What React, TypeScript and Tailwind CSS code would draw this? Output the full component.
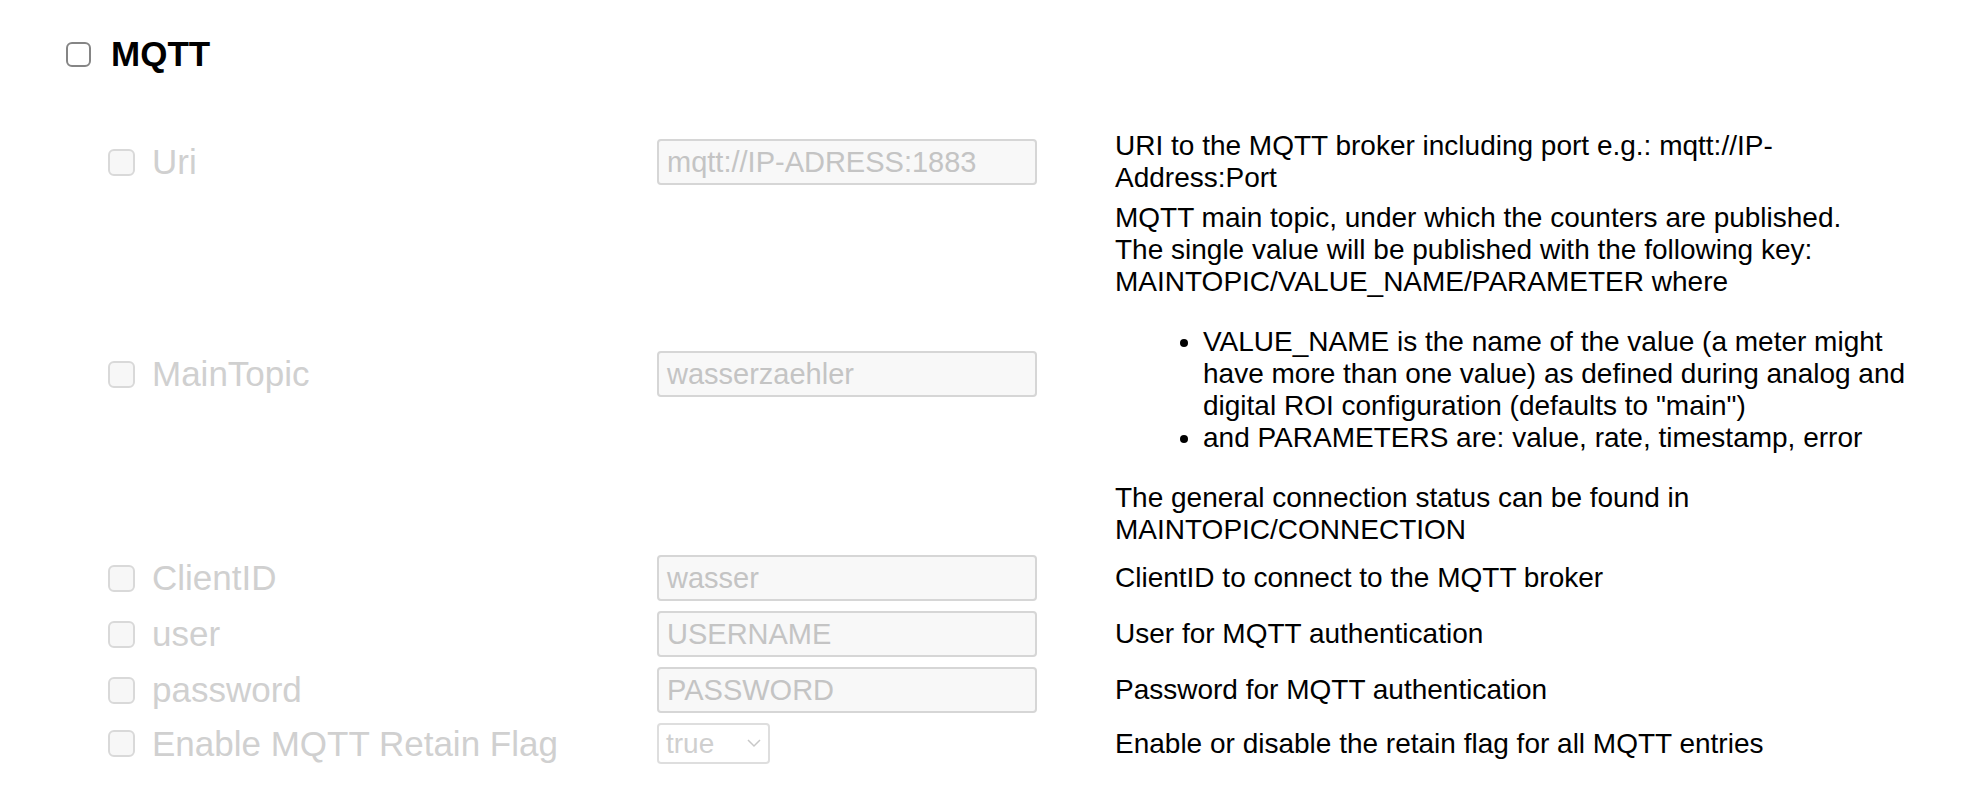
import React from "react";

type Row = {
  label: string;
  value: string;
  kind?: "input" | "select";
  desc: React.ReactNode;
};

const rows: Row[] = [
  {
    label: "Uri",
    value: "mqtt://IP-ADRESS:1883",
    desc: "URI to the MQTT broker including port e.g.: mqtt://IP-Address:Port",
  },
  {
    label: "MainTopic",
    value: "wasserzaehler",
    desc: (
      <>
        MQTT main topic, under which the counters are published.
        <br />
        The single value will be published with the following key:
        MAINTOPIC/VALUE_NAME/PARAMETER where
        <ul className="list-disc pl-[88px] my-[28px]">
          <li>
            VALUE_NAME is the name of the value (a meter might have more than
            one value) as defined during analog and digital ROI configuration
            (defaults to "main")
          </li>
          <li>and PARAMETERS are: value, rate, timestamp, error</li>
        </ul>
        The general connection status can be found in MAINTOPIC/CONNECTION
      </>
    ),
  },
  {
    label: "ClientID",
    value: "wasser",
    desc: "ClientID to connect to the MQTT broker",
  },
  {
    label: "user",
    value: "USERNAME",
    desc: "User for MQTT authentication",
  },
  {
    label: "password",
    value: "PASSWORD",
    desc: "Password for MQTT authentication",
  },
  {
    label: "Enable MQTT Retain Flag",
    value: "true",
    kind: "select",
    desc: "Enable or disable the retain flag for all MQTT entries",
  },
];

const App = () => {
  return (
    <div className="w-[1986px] h-[812px] bg-white font-['Liberation_Sans',Arial,sans-serif] text-black overflow-hidden">
      {/* heading */}
      <div className="flex items-center pl-[66px] pt-[34px] h-[74px]">
        <span className="w-[25px] h-[25px] rounded-[6px] border-2 border-[#858585] bg-white" />
        <h2 className="ml-[20px] text-[35px] leading-[40px] font-bold">MQTT</h2>
      </div>

      {/* parameter table */}
      <div className="mt-[52px] pl-[108px] pr-[64px] grid grid-cols-[549px_458px_1fr] items-center">
        {rows.map((r) => (
          <React.Fragment key={r.label}>
            <div className="flex items-center py-[5px]">
              <span className="w-[27px] h-[27px] rounded-[6px] border-2 border-[#d9d9d9] bg-[#f7f7f7]" />
              <span className="ml-[17px] text-[35px] leading-[40px] text-[#d0d0d0] whitespace-nowrap">
                {r.label}
              </span>
            </div>
            <div className="py-[5px]">
              {r.kind === "select" ? (
                <div className="w-[113px] h-[41px] border-2 border-[#dedede] rounded-[4px] bg-white flex items-center justify-between px-[7px]">
                  <span className="text-[28px] text-[#cfcfcf] leading-none">{r.value}</span>
                  <svg width="14" height="9" viewBox="0 0 14 9" fill="none">
                    <path d="M1 1l6 6 6-6" stroke="#c8c8c8" strokeWidth="1.5" />
                  </svg>
                </div>
              ) : (
                <div className="w-[380px] h-[46px] border-2 border-[#d6d6d6] rounded-[4px] bg-[#f8f8f8] flex items-center px-[8px]">
                  <span className="text-[29px] text-[#c4c4c4] leading-none whitespace-nowrap">
                    {r.value}
                  </span>
                </div>
              )}
            </div>
            <div className="py-[4px] text-[28px] leading-[32px]">{r.desc}</div>
          </React.Fragment>
        ))}
      </div>
    </div>
  );
};

export default App;
